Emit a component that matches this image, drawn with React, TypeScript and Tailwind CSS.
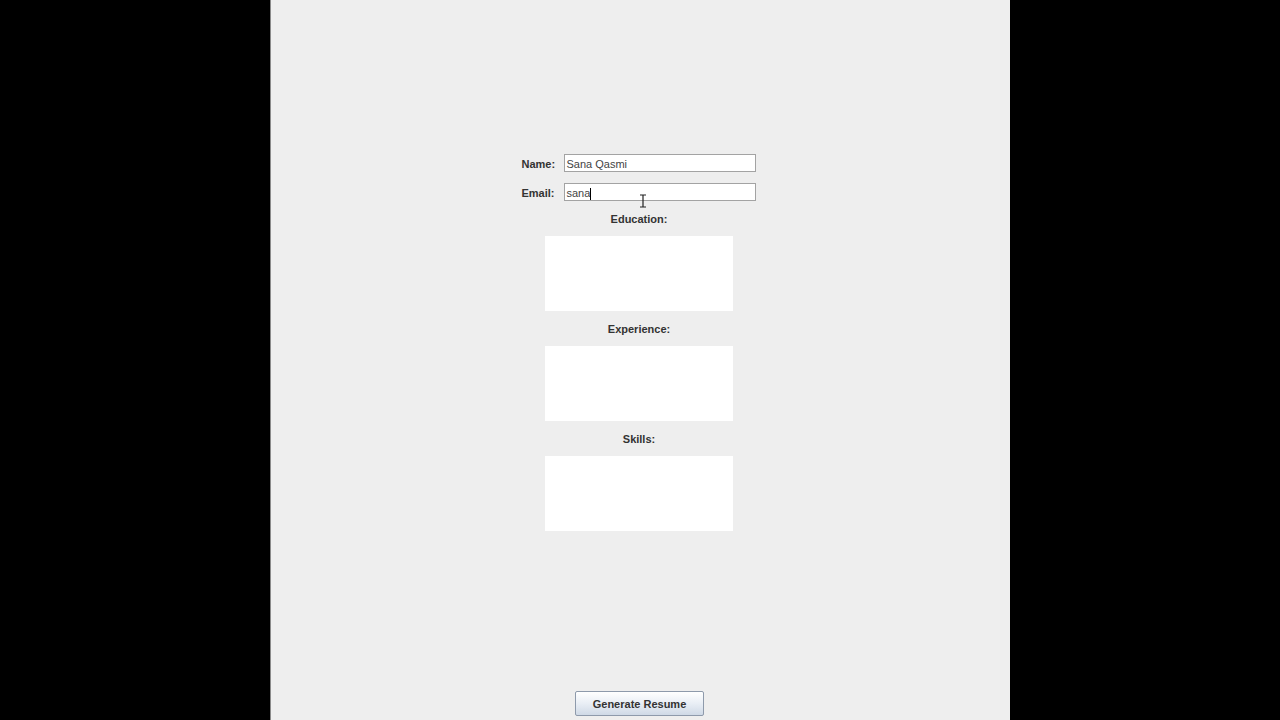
import React from 'react';

const font = { fontFamily: '"Liberation Sans", Arial, sans-serif' };

function Field({ label, value, caret }: { label: string; value: string; caret?: boolean }) {
  return (
    <div className="flex items-center h-[18px]">
      <span className="w-[42px] text-[11px] font-bold text-[#333333] pt-[2px]">{label}</span>
      <div className="w-[192px] h-[18px] bg-white border border-[#a3a3a3] flex items-center px-[2px] pt-[3px] text-[11px] text-[#444444]">
        {value}
        {caret && <span className="w-px h-[12px] bg-black" />}
      </div>
    </div>
  );
}

function Area({ label }: { label: string }) {
  return (
    <div className="flex flex-col items-center -ml-[2px]">
      <div className="h-[14px] leading-[14px] text-[11px] font-bold text-[#333333] mb-[10px]">{label}</div>
      <div className="w-[188px] h-[75px] bg-white mb-[11px]" />
    </div>
  );
}

export default function App(): React.ReactElement {
  return (
    <div className="w-[1280px] h-[720px] bg-black" style={font}>
      <div className="relative mx-auto w-[740px] h-[720px] bg-[#eeeeee] shadow-[inset_1px_0_0_#8a8a8a] flex flex-col items-center pt-[154px] pb-[4px]">
        <div className="flex flex-col gap-[11px] mb-[11px] -ml-[3px]">
          <Field label="Name:" value="Sana Qasmi" />
          <Field label="Email:" value="sana" caret />
        </div>
        <Area label="Education:" />
        <Area label="Experience:" />
        <Area label="Skills:" />
        <button className="mt-auto -ml-[1px] w-[129px] h-[25px] pt-[2px] border border-[#8e9aab] bg-gradient-to-b from-[#ffffff] via-[#e9eef5] to-[#cfd9e6] text-[11px] font-bold text-[#333333] rounded-[2px]">
          Generate Resume
        </button>
        {/* I-beam mouse cursor */}
        <svg className="absolute left-[369px] top-[194px]" width="8" height="14" viewBox="0 0 8 14">
          <path d="M1 1h6M4 1v12M1 13h6" stroke="#222" strokeWidth="1.2" fill="none" />
        </svg>
      </div>
    </div>
  );
}
